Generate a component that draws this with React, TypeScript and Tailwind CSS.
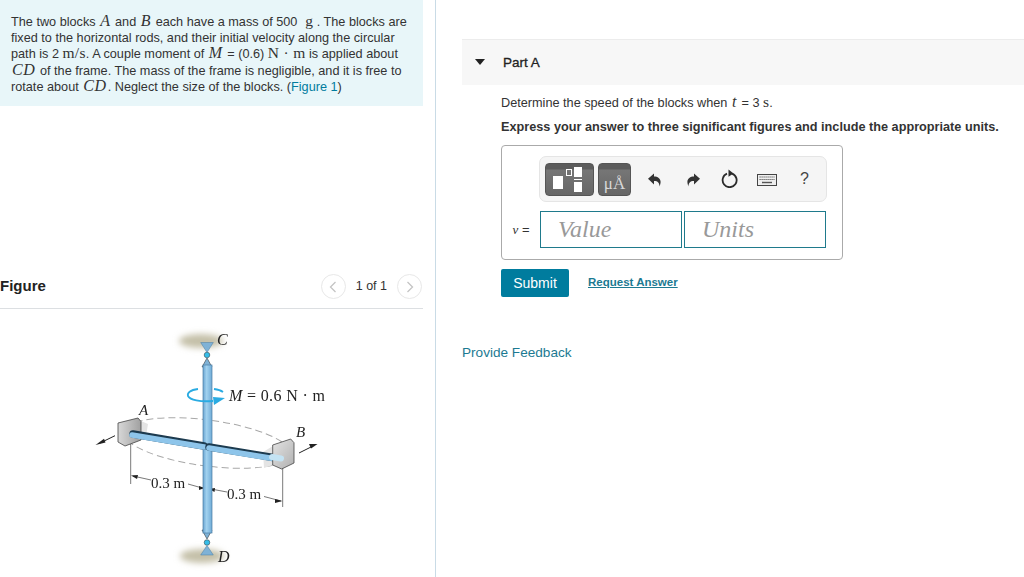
import React from 'react';

function V({ children }: { children: React.ReactNode }) {
  return <span className="font-['Liberation_Serif',serif] italic text-[16px] leading-none tracking-[0.6px] mx-[1px]">{children}</span>;
}

function R({ children }: { children: React.ReactNode }) {
  return <span className="font-['Liberation_Serif',serif] text-[15.5px] leading-none tracking-[0.3px]">{children}</span>;
}

function Figure() {
  return (
    <svg width="260" height="257" viewBox="80 320 260 257" className="block">
      <defs>
        <filter id="soft" x="-20%" y="-20%" width="140%" height="140%">
          <feGaussianBlur stdDeviation="0.35" />
        </filter>
        <filter id="shadow" x="-40%" y="-80%" width="180%" height="260%">
          <feGaussianBlur stdDeviation="3" />
        </filter>
        <linearGradient id="rodV" x1="0" x2="1" y1="0" y2="0">
          <stop offset="0" stopColor="#6ba6d2" />
          <stop offset="0.4" stopColor="#a2d2ef" />
          <stop offset="1" stopColor="#6fabd6" />
        </linearGradient>
        <linearGradient id="blockA" x1="0" x2="1" y1="0" y2="0">
          <stop offset="0" stopColor="#d8d8d8" />
          <stop offset="1" stopColor="#a0a0a0" />
        </linearGradient>
        <linearGradient id="blockB" x1="0" x2="1" y1="0" y2="1">
          <stop offset="0" stopColor="#e4e4e4" />
          <stop offset="1" stopColor="#b0b0b0" />
        </linearGradient>
      </defs>
      <ellipse cx="201" cy="341" rx="22" ry="7" fill="#c4c0a8" filter="url(#shadow)" />
      <ellipse cx="202" cy="556" rx="22" ry="7" fill="#c4c0a8" filter="url(#shadow)" />
      <g filter="url(#soft)">
        <ellipse cx="207" cy="443" rx="84" ry="23" fill="none" stroke="#a8a8a8" strokeWidth="1" strokeDasharray="7 4" transform="rotate(7.5 207 443)" />
        {/* dimensions */}
        <g stroke="#555" strokeWidth="0.8" fill="none">
          <path d="M130.7 444V484" />
          <path d="M282.7 468V507" />
          <path d="M133 476L151 480" />
          <path d="M188 484L204 488.5" />
          <path d="M211 489L227 492" />
          <path d="M264 496.5L281 501" />
          <path d="M206.5 484V493" />
        </g>
        <path d="M131 475.5L138 475L137 479Z" fill="#222" />
        <path d="M282.5 501L275 499L275 503Z" fill="#222" />
        <path d="M204.5 488L199 486L199 490Z" fill="#222" />
        <path d="M209 489L215 488L214.5 492Z" fill="#222" />
        {/* upper pin */}
        <path d="M200.7 342.5H213.3L207 352.5Z" fill="#7fb2d6" stroke="#4a7da3" strokeWidth="0.5" />
        <circle cx="207" cy="355" r="2.8" fill="#35bde8" stroke="#333" strokeWidth="0.5" />
        <path d="M207 358L212 367H202Z" fill="#7fb2d6" stroke="#222" strokeWidth="0.5" />
        {/* lower pin */}
        <path d="M202 530H212L207 539Z" fill="#7fb2d6" stroke="#222" strokeWidth="0.5" />
        <circle cx="207" cy="542.5" r="2.8" fill="#35bde8" stroke="#333" strokeWidth="0.5" />
        <path d="M200.7 555H213.3L207 545.5Z" fill="#7fb2d6" stroke="#4a7da3" strokeWidth="0.5" />
        {/* halos behind blocks */}
        <path d="M141 421L148 424L146 436L141 438Z" fill="#e4e4e4" />
        <path d="M273 446L263 452L264 468L273 465Z" fill="#e4e4e4" />
        {/* block A */}
        <path d="M118 423L138 418L141 421.5V440L125 446L118 442Z" fill="url(#blockA)" stroke="#444" strokeWidth="0.8" />
        {/* vertical rod */}
        <rect x="203" y="365" width="9" height="168" fill="url(#rodV)" stroke="#4a7da3" strokeWidth="0.7" />
        {/* horizontal rod */}
        <path d="M133 434L204 446" stroke="#1d3a4f" strokeWidth="7.5" strokeLinecap="round" />
        <path d="M132 435L204 447" stroke="#8ec5ea" strokeWidth="5.6" strokeLinecap="round" />
        <path d="M209 447L276 458" stroke="#1d3a4f" strokeWidth="7.5" strokeLinecap="round" />
        <path d="M209 448L276 459" stroke="#8ec5ea" strokeWidth="5.6" strokeLinecap="round" />
        {/* block B */}
        <path d="M272.7 445L290.7 439L294 442.7L294 463L281.7 469L272.7 465Z" fill="url(#blockB)" stroke="#444" strokeWidth="0.8" />
        <path d="M272 457L281 458.5" stroke="#c4e3f3" strokeWidth="6" strokeLinecap="round" />
        {/* velocity arrows */}
        <path d="M115 435.7L100 443" stroke="#222" strokeWidth="1" />
        <path d="M95.5 445L104 438.8L105.5 442.5Z" fill="#222" />
        <path d="M299 453L313 446" stroke="#222" strokeWidth="1" />
        <path d="M317.5 444L309 444L311 448.5Z" fill="#222" />
        {/* moment arrow */}
        <path d="M198 389C190 390 187 393 188 396C190 400 200 402 213 401" fill="none" stroke="#29abe2" strokeWidth="1.8" />
        <path d="M214 389C218 389.5 221 390.5 223 392" fill="none" stroke="#29abe2" strokeWidth="1.8" />
        <path d="M225 398L213 397L214 405Z" fill="#29abe2" />
      </g>
      <g fontFamily="'Liberation Serif', serif" fill="#222" filter="url(#soft)">
        <text x="217" y="345" fontSize="16" fontStyle="italic">C</text>
        <text x="139" y="415" fontSize="15" fontStyle="italic">A</text>
        <text x="296" y="437" fontSize="15" fontStyle="italic">B</text>
        <text x="218" y="562" fontSize="16" fontStyle="italic">D</text>
        <text x="229" y="401" fontSize="16" letterSpacing="0.35"><tspan fontStyle="italic">M</tspan> = 0.6 N · m</text>
        <text x="151" y="488" fontSize="15">0.3 m</text>
        <text x="227" y="499" fontSize="15">0.3 m</text>
      </g>
    </svg>
  );
}

function Toolbar() {
  return (
    <div className="flex items-center w-[288px] h-[46px] ml-[37px] pl-[5px] bg-[#f5f5f5] border border-[#e5e5e5] rounded-[7px]">
      <div className="flex items-start w-[49px] h-[33px] rounded-[4px] bg-[linear-gradient(#5c5c5c_0,#5c5c5c_5px,#767676_6px,#666_100%)] border border-[#555]">
        <div className="w-[10px] h-[13px] bg-white ml-[7px] mt-[12px]" />
        <div className="w-[6px] h-[7px] border border-white ml-[3px] mt-[5px]" />
        <div className="flex flex-col gap-[1px] ml-[2px] mt-[3px]">
          <div className="w-[8px] h-[10px] bg-white" />
          <div className="w-[8px] h-[1px] bg-white mt-[1px]" />
          <div className="w-[8px] h-[10px] bg-white mt-[1px]" />
        </div>
      </div>
      <div className="flex items-center justify-center ml-[4px] w-[33px] h-[33px] rounded-[4px] bg-[linear-gradient(#5c5c5c_0,#5c5c5c_5px,#767676_6px,#666_100%)] border border-[#555] font-['Liberation_Serif',serif] text-[17px] leading-none text-[#d8d8d8] pt-[9px]">
        μÅ
      </div>
      <svg width="14" height="14" viewBox="0 0 14 14" className="ml-[17px] mt-[1px]">
        <path d="M0 5.8L6 0.5V3.5C11 3.5 14.5 7 11.5 13.5C11.5 10 10 8 6 8V11.5Z" fill="#333" />
      </svg>
      <svg width="14" height="14" viewBox="0 0 14 14" className="ml-[24px] mt-[1px]">
        <path d="M14 5.8L8 0.5V3.5C3 3.5 -0.5 7 2.5 13.5C2.5 10 4 8 8 8V11.5Z" fill="#333" />
      </svg>
      <svg width="18" height="19" viewBox="0 0 18 19" className="ml-[21px] -mt-[1px]">
        <path d="M6 4.7A7 7 0 1 0 11 4.6" fill="none" stroke="#2b2b2b" strokeWidth="1.8" />
        <path d="M7.5 0.5L12.5 4.4L7.5 7.8Z" fill="#2b2b2b" />
      </svg>
      <svg width="20" height="12" viewBox="0 0 20 12" className="ml-[18px] mt-[2px]">
        <rect x="0.5" y="0.5" width="19" height="11" fill="#eee" stroke="#444" />
        <path d="M2.5 3H17.5M2.5 5.5H17.5" stroke="#555" strokeWidth="1.2" strokeDasharray="1.2 0.8" />
        <path d="M5 8.5H15" stroke="#555" strokeWidth="1.4" />
      </svg>
      <span className="ml-[23px] text-[16px] text-[#444] font-['Liberation_Sans',sans-serif]">?</span>
    </div>
  );
}

export default function App() {
  return (
    <div className="flex w-[1024px] h-[577px] overflow-hidden bg-white font-['Liberation_Sans',sans-serif] text-[#333]">
      <div className="w-[436px] h-full shrink-0 border-r border-[#c9dbe6]">
        <div className="w-[423px] h-[106px] bg-[#e8f6f9] pl-[11px] pt-[13px] text-[12.7px] leading-[16px] whitespace-nowrap">
          <div className="h-[17px]">The two blocks <V>A</V> and <V>B</V> each have a mass of 500 <R>&nbsp;g</R> . The blocks are</div>
          <div className="h-[15px]">fixed to the horizontal rods, and their initial velocity along the circular</div>
          <div className="h-[17px]">path is 2 <R>m/s</R>. A couple moment of <V>M</V> = (0.6) <R>N · m</R> is applied about</div>
          <div className="h-[16px]"><V>CD</V> of the frame. The mass of the frame is negligible, and it is free to</div>
          <div className="h-[16px]">rotate about <V>CD</V>. Neglect the size of the blocks. (<span className="text-[#007c9e]">Figure 1</span>)</div>
        </div>
        <div className="w-[423px] mt-[164px] h-[39px] flex items-center justify-between border-b border-[#dcdfe2]">
          <span className="text-[15px] font-bold text-[#222] -mt-[6px]">Figure</span>
          <div className="flex items-center -mt-[5px]">
            <div className="flex items-center justify-center w-[25px] h-[25px] rounded-full border border-[#e8e8e8] text-[#c4c4c4]">
              <svg width="8" height="12" viewBox="0 0 8 12"><path d="M6.5 1L1.5 6L6.5 11" fill="none" stroke="currentColor" strokeWidth="1.3" /></svg>
            </div>
            <span className="mx-[10px] text-[12.5px] text-[#333]">1 of 1</span>
            <div className="flex items-center justify-center w-[25px] h-[25px] rounded-full border border-[#e8e8e8] text-[#c4c4c4] mr-[1px]">
              <svg width="8" height="12" viewBox="0 0 8 12"><path d="M1.5 1L6.5 6L1.5 11" fill="none" stroke="currentColor" strokeWidth="1.3" /></svg>
            </div>
          </div>
        </div>
        <div className="ml-[80px] mt-[11px]">
          <Figure />
        </div>
      </div>
      <div className="flex-1 pl-[26px] pt-[39px]">
        <div className="flex items-center h-[46px] bg-[#f7f7f7] border-t border-[#ececec]">
          <svg width="10" height="6" viewBox="0 0 10 6" className="ml-[13px] -mt-[1px]">
            <path d="M0 0H10L5 6Z" fill="#222" />
          </svg>
          <span className="ml-[18px] mt-[1px] text-[13.5px] text-[#222] [-webkit-text-stroke:0.3px_#222]">Part A</span>
        </div>
        <div className="pl-[39px]">
          <div className="mt-[9px] h-[16px] text-[12.7px] leading-[16px] text-[#333]">
            Determine the speed of the blocks when <V>t</V> = 3 <R>s</R>.
          </div>
          <div className="mt-[9px] text-[12.7px] leading-[16px] font-bold text-[#333] whitespace-nowrap">
            Express your answer to three significant figures and include the appropriate units.
          </div>
          <div className="mt-[10px] w-[342px] h-[115px] border border-[#aaa] rounded-[4px] pt-[10px]">
            <Toolbar />
            <div className="flex items-center mt-[9px]">
              <span className="w-[38px] text-center text-[13px] text-[#333]"><span className="font-['Liberation_Serif',serif] italic">v</span> =</span>
              <div className="flex items-center w-[142px] h-[37px] border border-[#1f7a8c] pl-[17px] pb-[2px] font-['Liberation_Serif',serif] italic text-[24px] text-[#999]">Value</div>
              <div className="flex items-center w-[142px] h-[37px] ml-[2px] border border-[#1f7a8c] pl-[17px] pb-[2px] font-['Liberation_Serif',serif] italic text-[24px] text-[#999]">Units</div>
            </div>
          </div>
          <div className="flex items-center mt-[9px]">
            <div className="flex items-center justify-center w-[68px] h-[28px] rounded-[2px] bg-[#007c9e] text-white text-[14px]">Submit</div>
            <span className="ml-[19px] text-[11.5px] font-bold text-[#1c7a92] underline">Request Answer</span>
          </div>
        </div>
        <div className="mt-[48px] text-[13.6px] leading-[16px] text-[#1c7a92]">Provide Feedback</div>
      </div>
    </div>
  );
}
